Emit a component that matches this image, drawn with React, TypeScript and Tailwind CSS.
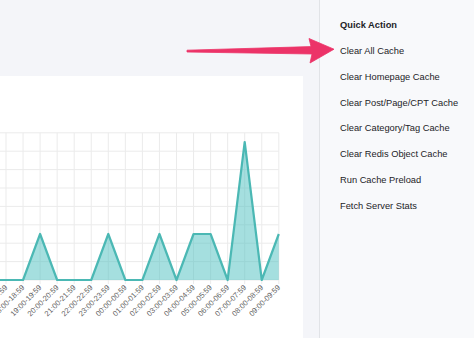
const hours = [
  "17:00-17:59",
  "18:00-18:59",
  "19:00-19:59",
  "20:00-20:59",
  "21:00-21:59",
  "22:00-22:59",
  "23:00-23:59",
  "00:00-00:59",
  "01:00-01:59",
  "02:00-02:59",
  "03:00-03:59",
  "04:00-04:59",
  "05:00-05:59",
  "06:00-06:59",
  "07:00-07:59",
  "08:00-08:59",
  "09:00-09:59",
]

const hits = [0, 0, 1, 0, 0, 0, 1, 0, 0, 1, 0, 1, 1, 0, 3, 0, 1]

const actions = [
  "Clear All Cache",
  "Clear Homepage Cache",
  "Clear Post/Page/CPT Cache",
  "Clear Category/Tag Cache",
  "Clear Redis Object Cache",
  "Run Cache Preload",
  "Fetch Server Stats",
]

// chart geometry, card-local coordinates
const X0 = 6
const STEP = 17.05
const BASE = 204
const UNIT = 46
const ROW = 18.4

function HitsChart() {
  const xs = hours.map((_, i) => X0 + i * STEP)
  const pts = [[X0 - STEP, BASE], ...hits.map((v, i) => [xs[i], BASE - v * UNIT])]
  const line = pts.map((p) => p.join(",")).join(" ")
  const area = `${X0 - STEP},${BASE} ${line} ${xs[xs.length - 1]},${BASE}`

  return (
    <svg width="303" height="262" className="block">
      {Array.from({ length: 9 }).map((_, k) => (
        <line key={"h" + k} x1={0} x2={xs[xs.length - 1]} y1={BASE - k * ROW} y2={BASE - k * ROW} stroke="#ebebeb" strokeWidth="1" />
      ))}
      {xs.map((x, i) => (
        <line key={"v" + i} x1={x} x2={x} y1={BASE - 8 * ROW} y2={BASE + 4} stroke="#ebebeb" strokeWidth="1" />
      ))}
      <polygon points={area} fill="rgba(75,192,192,0.5)" />
      <polyline points={line} fill="none" stroke="#4bb8b4" strokeWidth="2.2" strokeLinejoin="round" />
      {xs.map((x, i) => (
        <text
          key={"t" + i}
          x={x + 2}
          y={BASE + 8}
          textAnchor="end"
          fontSize="7.6"
          fill="#5f5f5f"
          fontFamily="Liberation Sans, Arial, sans-serif"
          transform={`rotate(-45 ${x + 2} ${BASE + 8})`}
        >
          {hours[i]}
        </text>
      ))}
    </svg>
  )
}

export default function App() {
  return (
    <div className="relative w-[474px] h-[338px] overflow-hidden flex bg-[#f4f5f9] font-['Liberation_Sans',Arial,sans-serif]">
      <div className="w-[319px] flex flex-col">
        <div className="h-[76px] shrink-0" />
        <div className="w-[303px] flex-1 bg-white overflow-hidden">
          <HitsChart />
        </div>
      </div>
      <div className="w-px bg-[#e1e3e7]" />
      <div className="flex-1 bg-[#f8f9fb] pl-[20px] pt-[13px] text-[9.3px] text-[#1d2327]">
        <div className="h-[26px] flex items-center font-bold">Quick Action</div>
        {actions.map((a) => (
          <div key={a} className="h-[25.8px] flex items-center">
            {a}
          </div>
        ))}
      </div>
      <svg className="absolute left-0 top-0 pointer-events-none" width="474" height="338">
        <polygon
          points="187,50.2 311,46.6 309,38.5 334,49.2 310,63 312,54 187,52"
          fill="#ec3368"
          stroke="#ec3368"
          strokeWidth="0.8"
          strokeLinejoin="round"
        />
      </svg>
    </div>
  )
}
